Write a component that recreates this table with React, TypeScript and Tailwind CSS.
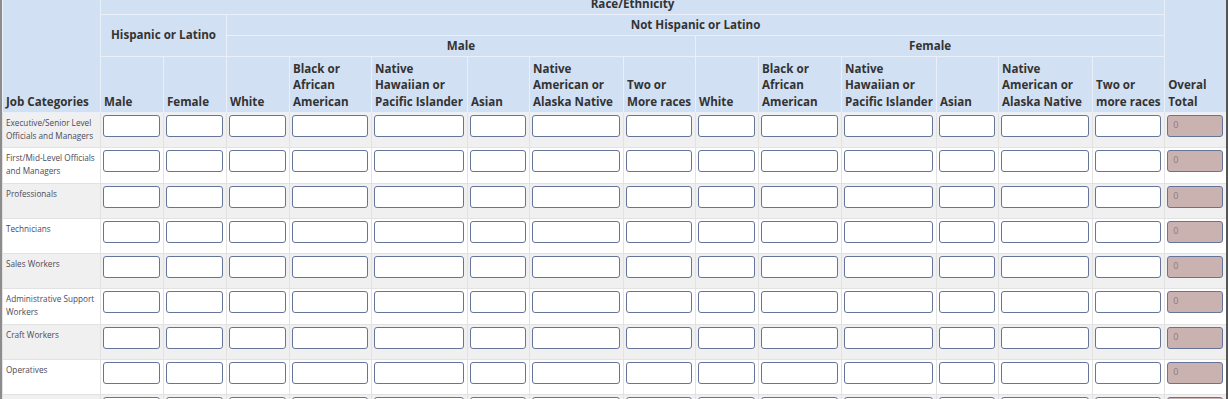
const groups = [
  { key: 'm', label: 'Male' },
  { key: 'f', label: 'Female' },
];

const raceCols = [
  { key: 'white', label: ['White'] },
  { key: 'black', label: ['Black or', 'African', 'American'] },
  { key: 'nhpi', label: ['Native', 'Hawaiian or', 'Pacific Islander'] },
  { key: 'asian', label: ['Asian'] },
  { key: 'aian', label: ['Native', 'American or', 'Alaska Native'] },
  { key: 'two', label: ['Two or', 'More races'] },
];

const jobCategories = [
  'Executive/Senior Level Officials and Managers',
  'First/Mid-Level Officials and Managers',
  'Professionals',
  'Technicians',
  'Sales Workers',
  'Administrative Support Workers',
  'Craft Workers',
  'Operatives',
  'Laborers and Helpers',
  'Service Workers',
];

// widths in px, job column first, overall total last
const colWidths = [98, 63, 63, 63, 82, 96, 62, 94, 72, 63, 83, 95, 62, 94, 72, 62];

const th = 'bg-[#d2e0f4] border border-[#e9f0fa] text-[#333] font-bold text-[11.6px] leading-[16.5px] px-[3px]';

function CellInput({ total }: { total?: boolean }) {
  if (total) {
    return (
      <div className="h-[22px] w-full rounded-[3px] border-[1.5px] border-[#66749a] bg-[#cab2b0] pl-[5px] pt-[2px] text-[9px] leading-[13px] text-[#8a7b7e]">
        0
      </div>
    );
  }
  return <div className="h-[22px] w-full rounded-[3px] border-[1.5px] border-[#66749a] bg-white" />;
}

export default function App() {
  return (
    <div className="w-[1228px] h-[399px] overflow-hidden bg-white border-l-2 border-r-2 border-l-[#8c8c8c] border-r-[#555]" style={{ fontFamily: '"Open Sans", "Noto Sans", sans-serif' }}>
      <table className="table-fixed border-collapse w-full -mt-[7px]">
        <colgroup>
          {colWidths.map((w, i) => (
            <col key={i} style={{ width: w }} />
          ))}
        </colgroup>
        <thead>
          <tr className="h-[21px]">
            <th rowSpan={4} className={`${th} text-left align-bottom pb-[2px]`}>Job Categories</th>
            <th colSpan={14} className={`${th} text-center align-middle`}>Race/Ethnicity</th>
            <th rowSpan={4} className={`${th} text-left align-bottom pb-[2px]`}>
              Overal
              <br />
              Total
            </th>
          </tr>
          <tr className="h-[21px]">
            <th colSpan={2} rowSpan={2} className={`${th} text-center align-middle`}>Hispanic or Latino</th>
            <th colSpan={12} className={`${th} text-center align-middle`}>Not Hispanic or Latino</th>
          </tr>
          <tr className="h-[21px]">
            {groups.map((g) => (
              <th key={g.key} colSpan={6} className={`${th} text-center align-middle`}>{g.label}</th>
            ))}
          </tr>
          <tr className="h-[56px]">
            <th className={`${th} text-left align-bottom pb-[2px]`}>Male</th>
            <th className={`${th} text-left align-bottom pb-[2px]`}>Female</th>
            {groups.map((g) =>
              raceCols.map((c) => (
                <th key={g.key + c.key} className={`${th} text-left align-bottom pb-[2px]`}>
                  {(g.key === 'f' && c.key === 'two' ? ['Two or', 'more races'] : c.label).map((l, i) => (
                    <div key={i} className="whitespace-nowrap">{l}</div>
                  ))}
                </th>
              ))
            )}
          </tr>
        </thead>
        <tbody>
          {jobCategories.map((job, r) => (
            <tr key={job} className={r % 2 === 0 ? 'bg-[#f0f0f0]' : 'bg-white'}>
              <td className="h-[35.3px] border border-[#e2e2e2] align-top pl-[3px] pr-0 pt-[3px] text-[8.2px] leading-[13px] text-[#4a4a5c]">
                {job}
              </td>
              {Array.from({ length: 15 }).map((_, c) => (
                <td key={c} className="h-[35.3px] border border-[#e2e2e2] align-top pl-[2px] pr-[3px] pt-[2px]">
                  <CellInput total={c === 14} />
                </td>
              ))}
            </tr>
          ))}
        </tbody>
      </table>
    </div>
  );
}
